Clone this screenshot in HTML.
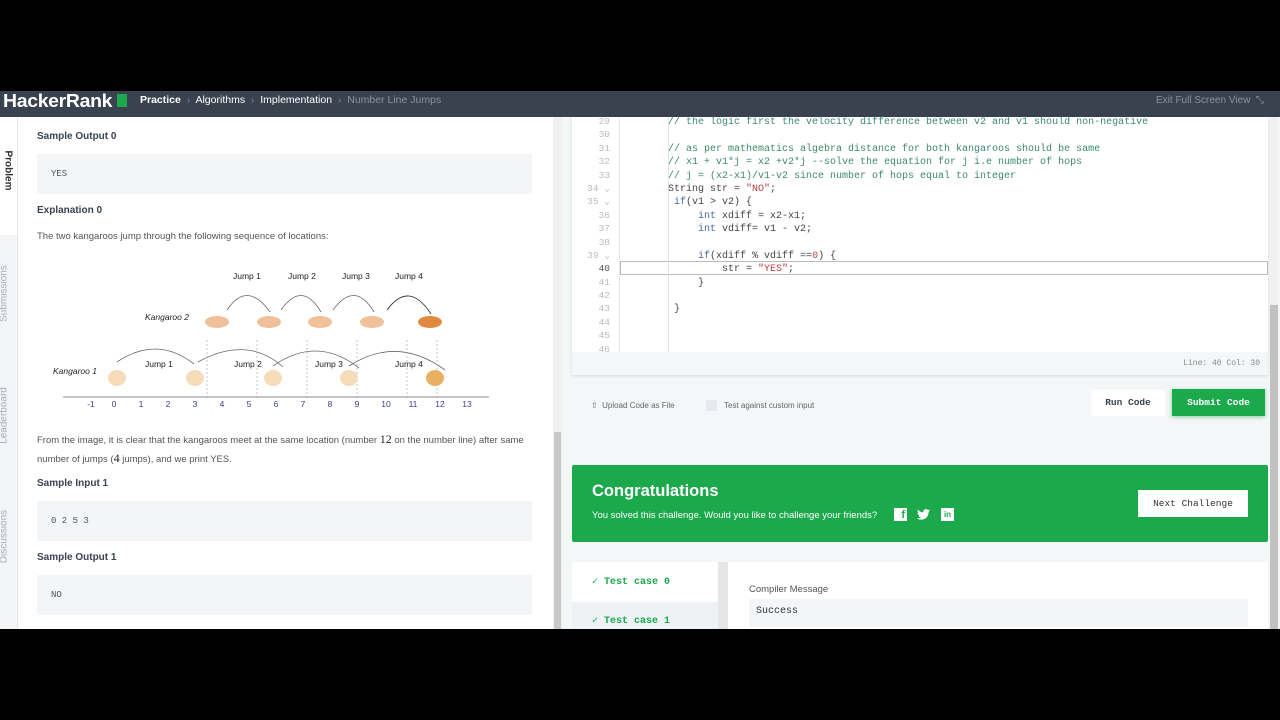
<!DOCTYPE html><html><head><style>
*{margin:0;padding:0;box-sizing:border-box}
body{width:1280px;height:720px;background:#000;position:relative;overflow:hidden;font-family:"Liberation Sans",sans-serif}
.a{position:absolute}
.mono{font-family:"Liberation Mono",monospace}
.code div{height:13.4px;line-height:13.4px;white-space:pre}
.c{color:#3d8a6a}.s{color:#b04040}.k{color:#4a6aa0}
</style></head><body>
<div class="a" style="left:0;top:91px;width:1280px;height:26px;background:#39424e"></div>
<div class="a" style="left:3px;top:91px;color:#fff;font-weight:bold;font-size:18px;line-height:20px;letter-spacing:-0.3px;transform:scaleX(1.08);transform-origin:left">HackerRank</div>
<div class="a" style="left:117px;top:94px;width:10px;height:13px;background:#1ba94c"></div>
<div class="a" style="left:140px;top:94px;font-size:10.5px;color:#fff;white-space:pre"><b>Practice</b>  <span style="color:#888">›</span>  Algorithms  <span style="color:#888">›</span>  Implementation  <span style="color:#888">›</span>  <span style="color:#8a929c">Number Line Jumps</span></div>
<div class="a" style="left:1156px;top:95px;font-size:10px;color:#8a929c">Exit Full Screen View &nbsp;⤡</div>

<!-- left panel -->
<div class="a" style="left:0;top:117px;width:562px;height:512px;background:#fff"></div>
<div class="a" style="left:17px;top:117px;width:1px;height:512px;background:#e2e6ea"></div>
<div class="a" style="left:0;top:235px;width:17px;height:394px;background:#f3f5f7"></div>
<div class="a" style="left:-12px;top:165px;transform:rotate(90deg);font-size:10px;font-weight:bold;color:#333;width:40px;text-align:center">Problem</div>
<div class="a" style="left:-26px;top:288px;transform:rotate(-90deg);font-size:10px;color:#aab;width:60px;text-align:center">Submissions</div>
<div class="a" style="left:-26px;top:410px;transform:rotate(-90deg);font-size:10px;color:#aab;width:60px;text-align:center">Leaderboard</div>
<div class="a" style="left:-26px;top:531px;transform:rotate(-90deg);font-size:10px;color:#aab;width:60px;text-align:center">Discussions</div>
<div class="a" style="left:553px;top:117px;width:9px;height:512px;background:#f0f0f0"></div>
<div class="a" style="left:554px;top:432px;width:7px;height:197px;background:#c8c8c8"></div>

<div class="a" style="left:37px;top:131px;font-size:10px;font-weight:bold;color:#39424e">Sample Output 0</div>
<div class="a mono" style="left:37px;top:154px;width:495px;height:40px;background:#f3f5f7;font-size:9px;color:#555;padding:15px 0 0 14px">YES</div>
<div class="a" style="left:37px;top:205px;font-size:10px;font-weight:bold;color:#39424e">Explanation 0</div>
<div class="a" style="left:37px;top:231px;font-size:9.5px;color:#555">The two kangaroos jump through the following sequence of locations:</div>

<svg class="a" style="left:37px;top:260px" width="470" height="155" font-family="Liberation Sans" font-size="8.5">
<g fill="#222" ><text x="196" y="19">Jump 1</text><text x="251" y="19">Jump 2</text><text x="305" y="19">Jump 3</text><text x="358" y="19">Jump 4</text>
<text x="108" y="60" font-style="italic">Kangaroo 2</text><text x="16" y="114" font-style="italic">Kangaroo 1</text>
<text x="108" y="107">Jump 1</text><text x="197" y="107">Jump 2</text><text x="278" y="107">Jump 3</text><text x="358" y="107">Jump 4</text></g>
<g fill="none" stroke="#666" stroke-width="0.8">
<path d="M190 50 Q210 20 233 52"/><path d="M244 50 Q265 20 284 52"/><path d="M296 50 Q318 20 337 52"/><path d="M350 50 Q372 20 394 54" stroke="#222"/>
<path d="M80 102 Q120 75 157 104"/><path d="M161 102 Q210 75 246 107"/><path d="M236 106 Q280 75 322 108"/><path d="M312 106 Q360 75 408 110"/>
<path d="M26 137 H452"/></g>
<g stroke="#aaa" stroke-dasharray="2,2" stroke-width="0.7"><path d="M170 80V140M220 80V140M270 80V140M320 80V140M370 80V140M400 80V140"/></g>
<g fill="#f0c09a"><ellipse cx="180" cy="62" rx="12" ry="6"/><ellipse cx="232" cy="62" rx="12" ry="6"/><ellipse cx="283" cy="62" rx="12" ry="6"/><ellipse cx="335" cy="62" rx="12" ry="6"/><ellipse cx="393" cy="62" rx="12" ry="6" fill="#e08a40"/></g>
<g fill="#f6dcb8"><ellipse cx="80" cy="118" rx="9" ry="8"/><ellipse cx="158" cy="118" rx="9" ry="8"/><ellipse cx="236" cy="118" rx="9" ry="8"/><ellipse cx="312" cy="118" rx="9" ry="8"/><ellipse cx="398" cy="118" rx="9" ry="8" fill="#e8b060"/></g>
<g fill="#3a3a90" font-size="8.5" text-anchor="middle"><text x="54" y="147">-1</text><text x="77" y="147">0</text><text x="104" y="147">1</text><text x="131" y="147">2</text><text x="158" y="147">3</text><text x="185" y="147">4</text><text x="212" y="147">5</text><text x="239" y="147">6</text><text x="266" y="147">7</text><text x="293" y="147">8</text><text x="320" y="147">9</text><text x="349" y="147">10</text><text x="376" y="147">11</text><text x="403" y="147">12</text><text x="430" y="147">13</text></g>
</svg>

<div class="a" style="left:37px;top:431px;font-size:9.5px;color:#555;line-height:19px;width:500px">From the image, it is clear that the kangaroos meet at the same location (number <span style="font-family:'Liberation Serif';font-size:12px;color:#222;line-height:10px">12</span> on the number line) after same number of jumps (<span style="font-family:'Liberation Serif';font-size:12px;color:#222;line-height:10px">4</span> jumps), and we print YES.</div>
<div class="a" style="left:37px;top:478px;font-size:10px;font-weight:bold;color:#39424e">Sample Input 1</div>
<div class="a mono" style="left:37px;top:501px;width:495px;height:40px;background:#f3f5f7;font-size:9px;color:#555;padding:15px 0 0 14px">0 2 5 3</div>
<div class="a" style="left:37px;top:552px;font-size:10px;font-weight:bold;color:#39424e">Sample Output 1</div>
<div class="a mono" style="left:37px;top:575px;width:495px;height:40px;background:#f3f5f7;font-size:9px;color:#555;padding:15px 0 0 14px">NO</div>

<!-- right -->
<div class="a" style="left:562px;top:117px;width:718px;height:512px;background:#f3f7f7"></div>
<div class="a" style="left:572px;top:117px;width:696px;height:258px;background:#fff;box-shadow:0 1px 3px rgba(0,0,0,.12)"></div>
<div class="a" style="left:572px;top:352px;width:696px;height:23px;background:#f3f7f7;font-size:8px;color:#888;text-align:right;padding:6px 8px 0 0"><span class="mono">Line: 40 Col: 30</span></div>
<div class="a" style="left:619px;top:117px;width:1px;height:235px;background:#e8e8e8"></div>
<div class="a" style="left:1270px;top:117px;width:8px;height:512px;background:#f0f0f0"></div>
<div class="a" style="left:1270px;top:305px;width:8px;height:324px;background:#c1c1c1"></div>
<div class="a" style="left:620px;top:261px;width:648px;height:14px;border:1px solid #bbb"></div>
<div class="a mono code" style="left:572px;top:115px;width:38px;text-align:right;font-size:9.5px;color:#bbb">
<div>29</div><div>30</div><div>31</div><div>32</div><div>33</div><div>34 ⌄</div><div>35 ⌄</div><div>36</div><div>37</div><div>38</div><div>39 ⌄</div><div style="color:#555">40</div><div>41</div><div>42</div><div>43</div><div>44</div><div>45</div><div>46</div></div>
<div class="a" style="left:668px;top:117px;width:1px;height:235px;background:#e5e5e5"></div>
<div class="a mono code" style="left:668px;top:116px;font-size:10px;color:#444">
<div class="c">// the logic first the velocity difference between v2 and v1 should non-negative</div><div> </div>
<div class="c">// as per mathematics algebra distance for both kangaroos should be same</div>
<div class="c">// x1 + v1*j = x2 +v2*j --solve the equation for j i.e number of hops</div>
<div class="c">// j = (x2-x1)/v1-v2 since number of hops equal to integer</div>
<div>String str = <span class="s">"NO"</span>;</div>
<div> <span class="k">if</span>(v1 &gt; v2) {</div>
<div>     <span class="k">int</span> xdiff = x2-x1;</div>
<div>     <span class="k">int</span> vdiff= v1 - v2;</div><div> </div>
<div>     <span class="k">if</span>(xdiff % vdiff ==<span class="s">0</span>) {</div>
<div>         str = <span class="s">"YES"</span>;</div>
<div>     }</div><div> </div><div> }</div></div>

<div class="a" style="left:591px;top:401px;font-size:8px;color:#666">⇧ &nbsp;Upload Code as File</div>
<div class="a" style="left:706px;top:400px;width:11px;height:11px;background:#e6eaee"></div>
<div class="a" style="left:724px;top:401px;font-size:8px;color:#666">Test against custom input</div>
<div class="a mono" style="left:1091px;top:390px;width:74px;height:26px;background:#fff;font-size:9.5px;font-weight:bold;color:#39424e;text-align:center;line-height:26px">Run Code</div>
<div class="a mono" style="left:1172px;top:389px;width:93px;height:27px;background:#1ba94c;font-size:9.5px;font-weight:bold;color:#fff;text-align:center;line-height:27px;box-shadow:0 1px 4px rgba(27,169,76,.5)">Submit Code</div>

<div class="a" style="left:572px;top:465px;width:696px;height:77px;background:#1ba94c;border-radius:2px"></div>
<div class="a" style="left:592px;top:482px;font-size:16.5px;font-weight:bold;color:#fff">Congratulations</div>
<div class="a" style="left:592px;top:510px;font-size:9.5px;color:#fff">You solved this challenge. Would you like to challenge your friends?</div>
<div class="a" style="left:894px;top:508px;width:13px;height:13px;background:#fff;color:#1ba94c;font-weight:bold;font-size:11px;text-align:right;line-height:14px;padding-right:2px">f</div>
<svg class="a" style="left:917px;top:509px" width="13" height="11" viewBox="0 0 24 20"><path fill="#fff" d="M24 2.4c-.9.4-1.8.6-2.8.8 1-.6 1.8-1.6 2.2-2.7-1 .6-2 1-3.1 1.2C19.4.7 18.1 0 16.6 0c-2.7 0-4.9 2.2-4.9 4.9 0 .4 0 .8.1 1.1C7.7 5.8 4.1 3.9 1.7.9c-.4.7-.7 1.6-.7 2.5 0 1.7.9 3.2 2.2 4.1-.8 0-1.6-.2-2.2-.6v.1c0 2.4 1.7 4.4 3.9 4.8-.4.1-.8.2-1.3.2-.3 0-.6 0-.9-.1.6 2 2.4 3.4 4.6 3.4-1.7 1.3-3.8 2.1-6.1 2.1-.4 0-.8 0-1.2-.1 2.2 1.4 4.8 2.2 7.5 2.2 9.1 0 14-7.5 14-14v-.6c1-.7 1.8-1.6 2.5-2.5z"/></svg>
<div class="a" style="left:941px;top:508px;width:13px;height:13px;background:#fff;color:#1ba94c;font-weight:bold;font-size:8px;text-align:center;line-height:13px">in</div>
<div class="a mono" style="left:1138px;top:490px;width:110px;height:27px;background:#fff;font-size:9.5px;color:#333;text-align:center;line-height:27px">Next Challenge</div>

<div class="a" style="left:572px;top:562px;width:696px;height:67px;background:#fff"></div>
<div class="a" style="left:572px;top:602px;width:146px;height:27px;background:#eef2f4"></div>
<div class="a" style="left:718px;top:562px;width:10px;height:67px;background:#e6e6e6"></div>
<div class="a mono" style="left:592px;top:576px;font-size:10px;font-weight:bold;color:#1ba94c">✓ Test case 0</div>
<div class="a mono" style="left:592px;top:615px;font-size:10px;font-weight:bold;color:#1ba94c">✓ Test case 1</div>
<div class="a" style="left:749px;top:584px;font-size:9.5px;color:#555">Compiler Message</div>
<div class="a mono" style="left:749px;top:599px;width:499px;height:28px;background:#f3f5f7;font-size:10px;color:#333;padding:7px 0 0 7px">Success</div>
<div class="a" style="left:0;top:629px;width:1280px;height:91px;background:#000"></div>
</body></html>
